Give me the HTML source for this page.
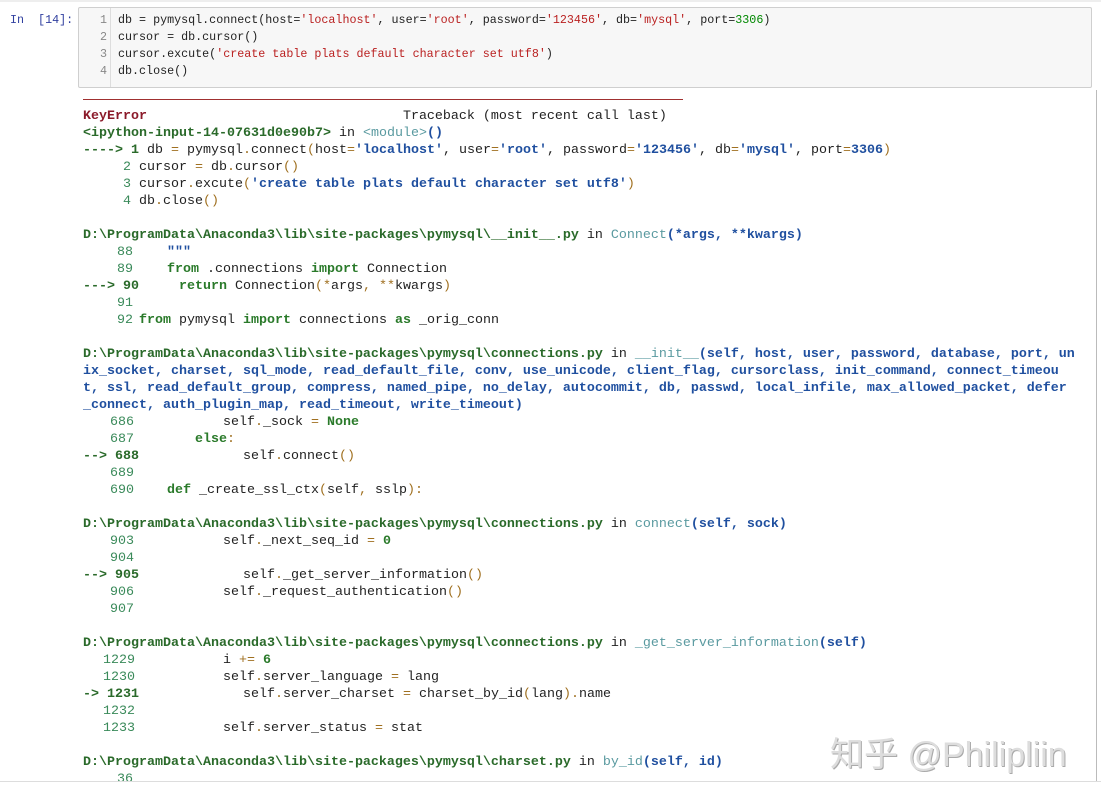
<!DOCTYPE html>
<html><head><meta charset="utf-8"><style>
body{margin:0;width:1101px;height:799px;background:#fff;position:relative;overflow:hidden;font-family:"Liberation Mono","Noto Sans CJK SC",monospace;}
.l{position:absolute;white-space:pre;height:17px;line-height:17px;font-size:13.33px;color:#222;}
.i{font-size:11.7px;}
.g{color:#2a6a2a;font-weight:bold}
.n{color:#3a8a5a}
.b{color:#1f4f9f;font-weight:bold}
.r{color:#ba2121}
.k{color:#2a7a2a;font-weight:bold}
.o{color:#a07020}
.c{color:#5a9aa0}
.ng{color:#888}
</style></head><body>
<div style="position:absolute;left:0;top:0;width:1101px;height:2px;background:#eee"></div>
<div class="l i" style="left:10px;top:12px;color:#303f9f">In  [14]:</div>
<div style="position:absolute;left:78px;top:7px;width:1012px;height:79px;background:#f7f7f7;border:1px solid #cfcfcf;border-radius:2px"></div>
<div style="position:absolute;left:110px;top:8px;width:1px;height:79px;background:#ddd"></div>
<div class="l i ng" style="left:100px;top:12px">1</div>
<div class="l i ng" style="left:100px;top:29px">2</div>
<div class="l i ng" style="left:100px;top:46px">3</div>
<div class="l i ng" style="left:100px;top:63px">4</div>
<div class="l i" style="left:118px;top:12px">db = pymysql.connect(host=<span class="r">'localhost'</span>, user=<span class="r">'root'</span>, password=<span class="r">'123456'</span>, db=<span class="r">'mysql'</span>, port=<span style="color:#080">3306</span>)</div>
<div class="l i" style="left:118px;top:29px">cursor = db.cursor()</div>
<div class="l i" style="left:118px;top:46px">cursor.excute(<span class="r">'create table plats default character set utf8'</span>)</div>
<div class="l i" style="left:118px;top:63px">db.close()</div>
<div style="position:absolute;left:1096px;top:90px;width:1px;height:692px;background:#bbb"></div>
<div style="position:absolute;left:0;top:781px;width:1101px;height:1px;background:#ddd"></div>
<div style="position:absolute;left:83px;top:99px;width:600px;height:1px;background:#a03030"></div>

<div class="l" style="left:83px;top:108px"><span style="color:#8b1a2a;font-weight:bold">KeyError</span>                                Traceback (most recent call last)</div>
<div class="l" style="left:83px;top:125px"><span class="g">&lt;ipython-input-14-07631d0e90b7&gt;</span> in <span class="c">&lt;module&gt;</span><span class="b">()</span></div>
<div class="l" style="left:83px;top:142px"><span class="g">----&gt; 1</span> db <span class="o">=</span> pymysql<span class="o">.</span>connect<span class="o">(</span>host<span class="o">=</span><span class="b">'localhost'</span>, user<span class="o">=</span><span class="b">'root'</span>, password<span class="o">=</span><span class="b">'123456'</span>, db<span class="o">=</span><span class="b">'mysql'</span>, port<span class="o">=</span><span class="b">3306</span><span class="o">)</span></div>
<div class="l" style="left:123px;top:159px"><span class="n">2</span> cursor <span class="o">=</span> db<span class="o">.</span>cursor<span class="o">()</span></div>
<div class="l" style="left:123px;top:176px"><span class="n">3</span> cursor<span class="o">.</span>excute<span class="o">(</span><span class="b">'create table plats default character set utf8'</span><span class="o">)</span></div>
<div class="l" style="left:123px;top:193px"><span class="n">4</span> db<span class="o">.</span>close<span class="o">()</span></div>

<div class="l" style="left:83px;top:227px"><span class="g">D:\ProgramData\Anaconda3\lib\site-packages\pymysql\__init__.py</span> in <span class="c">Connect</span><span class="b">(*args, **kwargs)</span></div>
<div class="l n" style="left:117px;top:244px">88</div><div class="l" style="left:167px;top:244px"><span class="b">"""</span></div>
<div class="l n" style="left:117px;top:261px">89</div><div class="l" style="left:167px;top:261px"><span class="k">from</span> .connections <span class="k">import</span> Connection</div>
<div class="l g" style="left:83px;top:278px">---&gt; 90</div><div class="l" style="left:179px;top:278px"><span class="k">return</span> Connection<span class="o">(*</span>args<span class="o">,</span> <span class="o">**</span>kwargs<span class="o">)</span></div>
<div class="l n" style="left:117px;top:295px">91</div>
<div class="l n" style="left:117px;top:312px">92</div><div class="l" style="left:139px;top:312px"><span class="k">from</span> pymysql <span class="k">import</span> connections <span class="k">as</span> _orig_conn</div>

<div class="l" style="left:83px;top:346px"><span class="g">D:\ProgramData\Anaconda3\lib\site-packages\pymysql\connections.py</span> in <span class="c">__init__</span><span class="b">(self, host, user, password, database, port, un</span></div>
<div class="l b" style="left:83px;top:363px">ix_socket, charset, sql_mode, read_default_file, conv, use_unicode, client_flag, cursorclass, init_command, connect_timeou</div>
<div class="l b" style="left:83px;top:380px">t, ssl, read_default_group, compress, named_pipe, no_delay, autocommit, db, passwd, local_infile, max_allowed_packet, defer</div>
<div class="l b" style="left:83px;top:397px">_connect, auth_plugin_map, read_timeout, write_timeout)</div>
<div class="l n" style="left:110px;top:414px">686</div><div class="l" style="left:223px;top:414px">self<span class="o">.</span>_sock <span class="o">=</span> <span class="k">None</span></div>
<div class="l n" style="left:110px;top:431px">687</div><div class="l" style="left:195px;top:431px"><span class="k">else</span><span class="o">:</span></div>
<div class="l g" style="left:83px;top:448px">--&gt; 688</div><div class="l" style="left:243px;top:448px">self<span class="o">.</span>connect<span class="o">()</span></div>
<div class="l n" style="left:110px;top:465px">689</div>
<div class="l n" style="left:110px;top:482px">690</div><div class="l" style="left:167px;top:482px"><span class="k">def</span> _create_ssl_ctx<span class="o">(</span>self<span class="o">,</span> sslp<span class="o">):</span></div>

<div class="l" style="left:83px;top:516px"><span class="g">D:\ProgramData\Anaconda3\lib\site-packages\pymysql\connections.py</span> in <span class="c">connect</span><span class="b">(self, sock)</span></div>
<div class="l n" style="left:110px;top:533px">903</div><div class="l" style="left:223px;top:533px">self<span class="o">.</span>_next_seq_id <span class="o">=</span> <span class="k">0</span></div>
<div class="l n" style="left:110px;top:550px">904</div>
<div class="l g" style="left:83px;top:567px">--&gt; 905</div><div class="l" style="left:243px;top:567px">self<span class="o">.</span>_get_server_information<span class="o">()</span></div>
<div class="l n" style="left:110px;top:584px">906</div><div class="l" style="left:223px;top:584px">self<span class="o">.</span>_request_authentication<span class="o">()</span></div>
<div class="l n" style="left:110px;top:601px">907</div>

<div class="l" style="left:83px;top:635px"><span class="g">D:\ProgramData\Anaconda3\lib\site-packages\pymysql\connections.py</span> in <span class="c">_get_server_information</span><span class="b">(self)</span></div>
<div class="l n" style="left:103px;top:652px">1229</div><div class="l" style="left:223px;top:652px">i <span class="o">+=</span> <span class="k">6</span></div>
<div class="l n" style="left:103px;top:669px">1230</div><div class="l" style="left:223px;top:669px">self<span class="o">.</span>server_language <span class="o">=</span> lang</div>
<div class="l g" style="left:83px;top:686px">-&gt; 1231</div><div class="l" style="left:243px;top:686px">self<span class="o">.</span>server_charset <span class="o">=</span> charset_by_id<span class="o">(</span>lang<span class="o">).</span>name</div>
<div class="l n" style="left:103px;top:703px">1232</div>
<div class="l n" style="left:103px;top:720px">1233</div><div class="l" style="left:223px;top:720px">self<span class="o">.</span>server_status <span class="o">=</span> stat</div>

<div class="l" style="left:83px;top:754px"><span class="g">D:\ProgramData\Anaconda3\lib\site-packages\pymysql\charset.py</span> in <span class="c">by_id</span><span class="b">(self, id)</span></div>
<div class="l n" style="left:117px;top:771px;height:10px;overflow:hidden">36</div>

<div style="position:absolute;left:830px;top:727px;font-family:'Liberation Sans','Noto Sans CJK SC',sans-serif;font-size:34px;color:#ddd;text-shadow:1px 1px 0 #aaa;white-space:nowrap">知乎 @Philipliin</div>
</body></html>
